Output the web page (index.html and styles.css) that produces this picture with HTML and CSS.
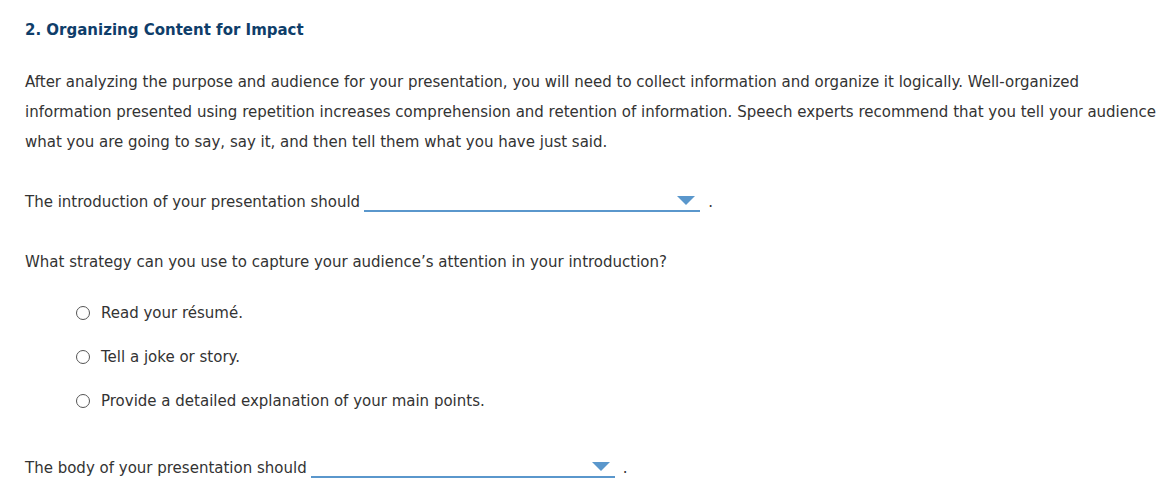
FILE: index.html
```html
<!DOCTYPE html>
<html lang="en">
<head>
    <meta charset="UTF-8">
    <title>Organizing Content for Impact</title>
    <link rel="stylesheet" href="styles.css">
</head>
<body>
    <div class="content">
        <h2 class="title">2. Organizing Content for Impact</h2>

        <p class="intro">After analyzing the purpose and audience for your presentation, you will need to collect information and organize it logically. Well-organized information presented using repetition increases comprehension and retention of information. Speech experts recommend that you tell your audience what you are going to say, say it, and then tell them what you have just said.</p>

        <div class="fill">
            <span>The introduction of your presentation should</span>
            <span class="select wide"><span class="arrow"></span></span>
            <span class="dot">.</span>
        </div>

        <div class="question">
            <p>What strategy can you use to capture your audience’s attention in your introduction?</p>
            <ul class="choices">
                <li><span class="radio"></span>Read your résumé.</li>
                <li><span class="radio"></span>Tell a joke or story.</li>
                <li><span class="radio"></span>Provide a detailed explanation of your main points.</li>
            </ul>
        </div>

        <div class="fill last">
            <span>The body of your presentation should</span>
            <span class="select"><span class="arrow"></span></span>
            <span class="dot">.</span>
        </div>
    </div>
</body>
</html>
```

FILE: styles.css
```css
body{
    margin:0;
    background:#fff;
    font-family:"DejaVu Sans",Verdana,sans-serif;
    font-size:15px;
    color:#333;
}
.content{
    padding:19px 0 0 25px;
    width:1140px;
}
.title{
    margin:0;
    font-size:15px;
    line-height:22px;
    color:#0f3e6a;
}
.intro{
    margin:26px 0 0;
    line-height:30px;
}
.fill{
    display:flex;
    align-items:flex-end;
    margin-top:35px;
    line-height:20px;
}
.fill.last{
    margin-top:47px;
}
.select{
    position:relative;
    display:inline-block;
    width:304px;
    height:18px;
    margin-left:4px;
    border-bottom:2px solid #5a97cc;
}
.select.wide{
    width:336px;
}
.arrow{
    position:absolute;
    right:5px;
    top:4px;
    width:0;
    height:0;
    border-left:9px solid transparent;
    border-right:9px solid transparent;
    border-top:9px solid #5a97cc;
}
.dot{
    margin-left:8px;
}
.question{
    margin-top:40px;
}
.question p{
    margin:0;
    line-height:20px;
}
.choices{
    list-style:none;
    margin:31px 0 0;
    padding:0 0 0 51px;
}
.choices li{
    display:flex;
    align-items:center;
    height:20px;
    margin-bottom:24px;
}
.choices li:last-child{
    margin-bottom:0;
}
.radio{
    width:12px;
    height:12px;
    border:1px solid #555;
    border-radius:50%;
    margin-right:11px;
}
```
